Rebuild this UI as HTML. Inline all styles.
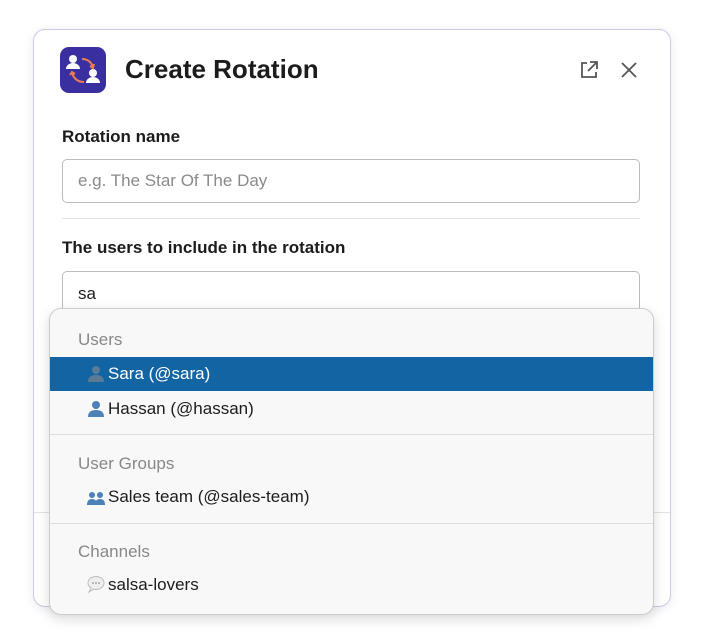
<!DOCTYPE html>
<html><head><style>
body{margin:0;width:703px;height:642px;background:#fff;font-family:"Liberation Sans",sans-serif;position:relative;overflow:hidden}
.modal{position:absolute;left:33px;top:29px;width:636px;height:576px;border:1px solid #c9cbe0;border-radius:12px;background:#fff;box-shadow:0 2px 10px rgba(80,80,140,.12)}
.abs{position:absolute}
.lbl{font-weight:bold;font-size:17px;color:#1d1c1d}
.inp{position:absolute;left:28px;width:578px;border:1px solid #bbb;border-radius:5px;box-sizing:border-box}
.dd{position:absolute;left:49px;top:308px;width:605px;height:307px;background:#f8f8f8;border:1px solid #ccc;border-radius:12px;box-shadow:0 4px 12px rgba(0,0,0,.15);box-sizing:border-box;overflow:hidden}
.hd{position:absolute;left:28px;font-size:17px;color:#888}
.it{position:absolute;left:0;right:0;height:34px;line-height:34px;padding-left:37px;font-size:17px;color:#1d1c1d}
.it svg{vertical-align:-3px;margin-right:3px}
.sep{position:absolute;left:0;right:0;height:1px;background:#ddd}
</style></head><body>
<div class="modal">
 <div class="abs" style="left:26px;top:17px;width:46px;height:46px;background:#3a2fa0;border-radius:9px">
  <svg width="46" height="46" viewBox="0 0 46 46">
   <circle cx="13" cy="12" r="4" fill="#fff"/><path d="M6 22a7 6 0 0 1 14 0z" fill="#fff"/>
   <circle cx="33" cy="26" r="4" fill="#fff"/><path d="M26 36a7 6 0 0 1 14 0z" fill="#fff"/>
   <path d="M22 12q8 0 11 8" stroke="#f07a50" stroke-width="2" fill="none"/><path d="M30 19l3 2 1-4" stroke="#f07a50" stroke-width="2" fill="none"/>
   <path d="M24 35q-9 0-12-9" stroke="#f07a50" stroke-width="2" fill="none"/><path d="M10 28l2-3 3 2" stroke="#f07a50" stroke-width="2" fill="none"/>
  </svg>
 </div>
 <div class="abs" style="left:91px;top:24px;font-size:26px;font-weight:bold;color:#1d1c1d">Create Rotation</div>
 <svg class="abs" style="left:545px;top:30px" width="20" height="20" viewBox="0 0 20 20" fill="none" stroke="#555" stroke-width="1.8"><path d="M8 3H3v14h14v-5"/><path d="M11 2h7v7M18 2L9 11"/></svg>
 <svg class="abs" style="left:586px;top:31px" width="18" height="18" viewBox="0 0 18 18" stroke="#555" stroke-width="1.8"><path d="M2 2l14 14M16 2L2 16"/></svg>
 <div class="abs lbl" style="left:28px;top:97px">Rotation name</div>
 <div class="inp" style="top:129px;height:44px;line-height:42px;padding-left:15px;font-size:17px;color:#8a8a8a">e.g. The Star Of The Day</div>
 <div class="abs" style="left:28px;width:578px;top:188px;height:1px;background:#e2e2e2"></div>
 <div class="abs lbl" style="left:28px;top:208px">The users to include in the rotation</div>
 <div class="inp" style="top:241px;height:44px;line-height:44px;padding-left:15px;font-size:17px;color:#1d1c1d">sa</div>
 <div class="abs" style="left:0;right:0;top:482px;height:1px;background:#e2e2e2"></div>
</div>
<div class="dd">
 <div class="hd" style="top:21px">Users</div>
 <div class="it" style="top:48px;background:#1264a3;color:#fff"><svg width="18" height="18" viewBox="0 0 18 18"><circle cx="9" cy="6" r="4" fill="#5a7a96"/><path d="M1 18q0-7 8-7t8 7z" fill="#5a7a96"/></svg>Sara (@sara)</div>
 <div class="it" style="top:83px"><svg width="18" height="18" viewBox="0 0 18 18"><circle cx="9" cy="6" r="4" fill="#4d82b8"/><path d="M1 18q0-7 8-7t8 7z" fill="#4d82b8"/></svg>Hassan (@hassan)</div>
 <div class="sep" style="top:125px"></div>
 <div class="hd" style="top:145px">User Groups</div>
 <div class="it" style="top:171px"><svg width="18" height="16" viewBox="0 0 18 16"><circle cx="5" cy="6" r="3" fill="#4d82b8"/><path d="M0 16q0-6 5-6t5 6z" fill="#4d82b8"/><circle cx="13" cy="6" r="3" fill="#4d82b8"/><path d="M8 16q0-6 5-6t5 6z" fill="#4d82b8"/></svg>Sales team (@sales-team)</div>
 <div class="sep" style="top:214px"></div>
 <div class="hd" style="top:233px">Channels</div>
 <div class="it" style="top:259px"><svg width="18" height="18" viewBox="0 0 18 18"><ellipse cx="9" cy="8" rx="8" ry="6.5" fill="#eee" stroke="#bbb"/><path d="M4 13l-2 4 5-3" fill="#eee" stroke="#bbb"/><circle cx="6" cy="8" r=".8" fill="#777"/><circle cx="9" cy="8" r=".8" fill="#777"/><circle cx="12" cy="8" r=".8" fill="#777"/></svg>salsa-lovers</div>
</div>
</body></html>
